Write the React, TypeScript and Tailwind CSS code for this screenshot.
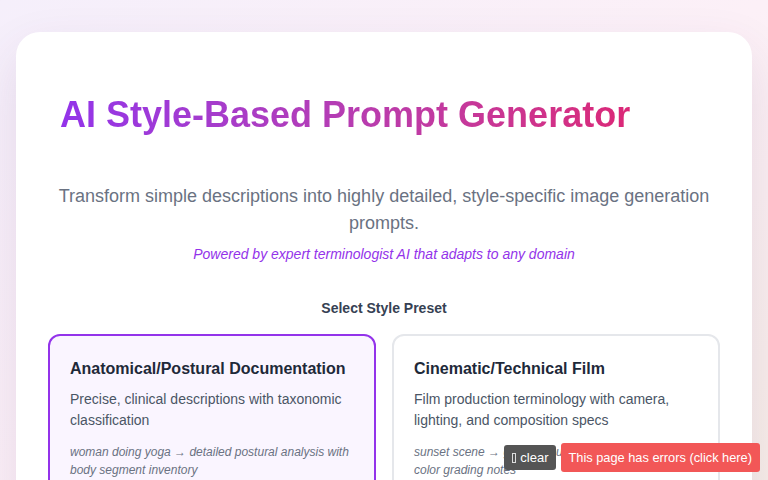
import React from 'react';

const presets = [
  {
    title: 'Anatomical/Postural Documentation',
    desc: 'Precise, clinical descriptions with taxonomic classification',
    example: 'woman doing yoga → detailed postural analysis with body segment inventory',
  },
  {
    title: 'Cinematic/Technical Film',
    desc: 'Film production terminology with camera, lighting, and composition specs',
    example: 'sunset scene → golden hour lighting, lens specs and color grading notes',
  },
];

export default function App() {
  const selected = 0;

  return (
    <div
      className="min-h-screen bg-gradient-to-br from-[#f5effb] via-[#fcf0f7] to-[#f6ede6] px-4 pt-8"
      style={{ fontFamily: '"Liberation Sans", Arial, sans-serif' }}
    >
      <div className="bg-white rounded-3xl shadow-[0_20px_50px_rgba(90,50,110,0.12)] px-8 pt-[63px] pb-10">
        {/* Header */}
        <h1 className="ml-3 text-4xl leading-10 font-bold bg-gradient-to-r from-[#9333ea] to-[#db2777] bg-clip-text text-transparent w-fit">
          AI Style-Based Prompt Generator
        </h1>

        <p className="mt-[48px] text-lg leading-[27px] text-gray-500 text-center px-2">
          Transform simple descriptions into highly detailed, style-specific image generation prompts.
        </p>
        <p className="mt-[7px] text-sm leading-5 italic text-[#9333ea] text-center">
          Powered by expert terminologist AI that adapts to any domain
        </p>

        {/* Style presets */}
        <h2 className="mt-[34px] mb-4 text-sm leading-5 font-semibold text-gray-700 text-center">
          Select Style Preset
        </h2>
        <div className="grid grid-cols-2 gap-4">
          {presets.map((p, i) => (
            <button
              key={p.title}
              className={
                i === selected
                  ? 'text-left rounded-xl border-2 border-[#9333ea] bg-[#faf5ff] px-5 pt-[21px] pb-5'
                  : 'text-left rounded-xl border-2 border-gray-200 bg-white px-5 pt-[21px] pb-5'
              }
            >
              <h3 className="text-base leading-6 font-bold text-gray-800 mb-2">{p.title}</h3>
              <p className="text-sm leading-[21px] text-gray-600 mb-3">{p.desc}</p>
              <p className="text-xs leading-[18px] italic text-gray-500">{p.example}</p>
            </button>
          ))}
        </div>
      </div>

      {/* Error overlay buttons */}
      <div className="fixed bottom-2 right-2 flex items-center gap-[5px]">
        <button className="flex items-center gap-[4px] bg-[#555555] text-white text-[13px] leading-4 pl-2 pr-[7px] py-[4.5px] rounded-[3px]">
          <span className="inline-block w-[4px] h-[10px] border border-white/80"></span>
          clear
        </button>
        <button className="bg-[#f25757] text-white text-[12.8px] leading-4 px-2 py-[6.5px] rounded-[3px]">
          This page has errors (click here)
        </button>
      </div>
    </div>
  );
}
